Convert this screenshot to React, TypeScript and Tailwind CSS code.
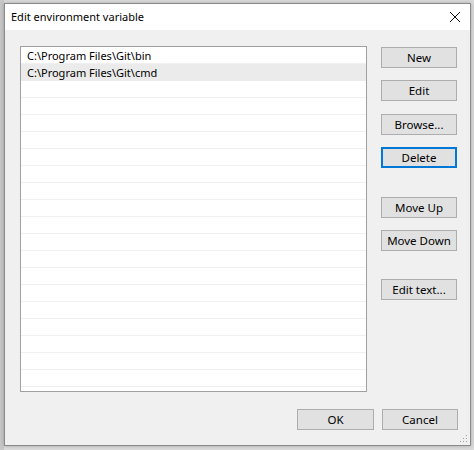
import React from "react";

const btn =
  "h-[21px] w-[76px] bg-[#e1e1e1] border border-[#adadad] text-[11.5px] text-black flex items-center justify-center";

function Btn({ label, focused, w }: { label: string; focused?: boolean; w?: string }) {
  return (
    <div
      className={
        focused
          ? "h-[21px] w-[76px] bg-[#e1e1e1] border-2 border-[#0078d7] text-[11.5px] text-black flex items-center justify-center"
          : w === "ok"
          ? "h-[21px] w-[77px] bg-[#e1e1e1] border border-[#adadad] text-[11.5px] text-black flex items-center justify-center"
          : btn
      }
    >
      {label}
    </div>
  );
}

export default function App() {
  const rows = ["C:\\Program Files\\Git\\bin", "C:\\Program Files\\Git\\cmd"];
  const all = Array.from({ length: 21 }, (_, i) => rows[i] ?? "");
  return (
    <div
      className="relative w-[474px] h-[450px] overflow-hidden bg-[#dcdcdc]"
      style={{ fontFamily: '"Noto Sans", "Open Sans", sans-serif' }}
    >
      <div className="absolute left-0 top-0 w-[4px] h-[450px] bg-[#c8c8c8]" />
      <div className="absolute left-[4px] top-[3px] w-[467px] h-[443px] border border-[#8a8a8a] bg-[#f0f0f0] flex flex-col shadow-[0_0_4px_rgba(0,0,0,0.25)]">
        <div className="h-[26px] bg-white flex items-center pl-[6px] shrink-0">
          <span className="text-[11px] text-black">Edit environment variable</span>
          <div className="ml-auto mr-[8px] w-[14px] h-[14px] flex items-center justify-center">
            <svg width="12" height="12" viewBox="0 0 12 12">
              <path d="M1 1L11 11M11 1L1 11" stroke="#111" strokeWidth="1" fill="none" />
            </svg>
          </div>
        </div>
        <div className="flex flex-col flex-1 relative">
          <div className="flex pl-[15px] pt-[16px]">
            <div className="w-[347px] h-[346px] bg-white border border-[#a0a0a0] overflow-hidden">
              {all.map((r, i) => (
                <div
                  key={i}
                  className={
                    i === 1
                      ? "h-[17px] bg-[#ebebeb] text-[11px] text-black pl-[6px] flex items-center leading-none"
                      : "h-[17px] border-b border-[#f0f0f0] text-[11px] text-black pl-[6px] flex items-center leading-none"
                  }
                >
                  {r}
                </div>
              ))}
            </div>
            <div className="ml-[14px] pt-[1px] flex flex-col">
              <Btn label="New" />
              <div className="h-[12px]" />
              <Btn label="Edit" />
              <div className="h-[13px]" />
              <Btn label="Browse..." />
              <div className="h-[12px]" />
              <Btn label="Delete" focused />
              <div className="h-[29px]" />
              <Btn label="Move Up" />
              <div className="h-[12px]" />
              <Btn label="Move Down" />
              <div className="h-[28px]" />
              <Btn label="Edit text..." />
            </div>
          </div>
          <div className="flex justify-end gap-[8px] pr-[12px] mt-[17px]">
            <Btn label="OK" w="ok" />
            <Btn label="Cancel" />
          </div>
          <div className="absolute right-[2px] bottom-[2px]">
            <svg width="8" height="8" viewBox="0 0 8 8">
              <rect x="6" y="0" width="1" height="1" fill="#a0a0a0" />
              <rect x="3" y="3" width="1" height="1" fill="#a0a0a0" />
              <rect x="6" y="3" width="1" height="1" fill="#a0a0a0" />
              <rect x="0" y="6" width="1" height="1" fill="#a0a0a0" />
              <rect x="3" y="6" width="1" height="1" fill="#a0a0a0" />
              <rect x="6" y="6" width="1" height="1" fill="#a0a0a0" />
            </svg>
          </div>
        </div>
      </div>
    </div>
  );
}
